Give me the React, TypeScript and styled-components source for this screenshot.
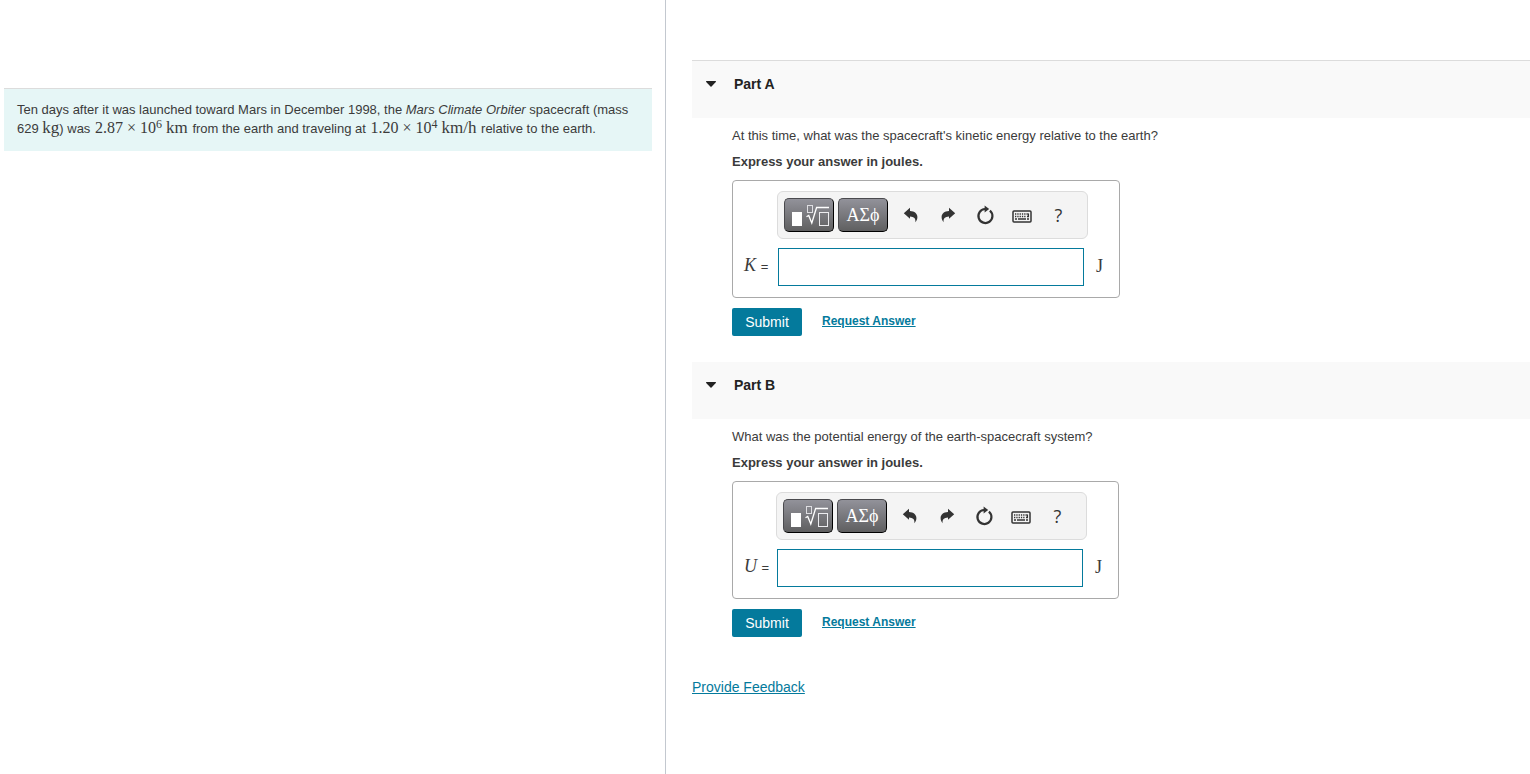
import React from "react";
import styled, { createGlobalStyle } from "styled-components";

const GlobalStyle = createGlobalStyle`
  * { box-sizing: border-box; }
  body {
    margin: 0;
    background: #fff;
    color: #3b3b3b;
    font-family: "Liberation Sans", Arial, sans-serif;
    font-size: 13px;
    line-height: 19px;
  }
  p { margin: 0; }
`;

const Layout = styled.div`
  display: flex;
  min-height: 100vh;
`;

const ProblemPane = styled.section`
  flex: 0 0 43.53%;
  border-right: 1px solid #c3c8cf;
  padding: 88px 13px 20px 4px;
`;

const ProblemBox = styled.div`
  background: #e6f6f6;
  border-top: 1px solid #dcdcdc;
  padding: 11px 13px 13px;
`;

const MathText = styled.span`
  margin: 0 1px;
  font-family: "Liberation Serif", "Times New Roman", serif;
  font-size: 16px;
  line-height: 1;
  white-space: nowrap;

  sup {
    font-size: 12px;
    line-height: 0;
    vertical-align: 5px;
  }
`;

const MathUnit = styled.span`
  font-family: "Liberation Serif", "Times New Roman", serif;
  font-size: 17px;
  line-height: 1;
`;

const AnswerPane = styled.main`
  flex: 1;
  min-width: 0;
  padding: 60px 0 40px 26px;
`;

const PartSection = styled.section`
  margin-bottom: 26px;
`;

const PartHeader = styled.header<{ $ruled?: boolean }>`
  background: #f9f9f9;
  border-top: ${(p) => (p.$ruled ? "1px solid #dcdcdc" : "0")};
  padding: 13px 14px 24px;
`;

const PartTitle = styled.h2`
  margin: 0;
  font: bold 14px/20px "Liberation Sans", Arial, sans-serif;
`;

const PartToggle = styled.button`
  display: flex;
  align-items: center;
  gap: 18px;
  border: 0;
  padding: 0;
  background: none;
  color: #222;
  font: inherit;
  cursor: pointer;
`;

const PartBody = styled.div`
  padding: 8px 16px 0 40px;
`;

const Instruction = styled.p`
  margin: 7px 0 9px;
  font-weight: bold;
`;

const AnswerBox = styled.div`
  display: grid;
  grid-template-columns: auto auto auto;
  align-items: center;
  width: fit-content;
  border: 1px solid #a9a9a9;
  border-radius: 4px;
  padding: 10px 16px 11px 11px;
`;

const Toolbar = styled.div`
  grid-column: 2 / 4;
  justify-self: start;
  display: flex;
  align-items: center;
  gap: 4px;
  height: 48px;
  margin: 0 0 9px -1px;
  border: 1px solid #dcdcdc;
  border-radius: 6px;
  padding: 0 10px 0 6px;
  background: #f4f4f4;
`;

const PaletteButton = styled.button`
  display: flex;
  align-items: center;
  justify-content: center;
  width: 50px;
  height: 34px;
  border: 1px solid #000;
  border-top-color: #4a4a4e;
  border-left-color: #4a4a4e;
  border-radius: 5px;
  padding: 0 0 1px;
  background: linear-gradient(#92929a, #5f5f60);
  color: #fff;
  font: 18px/20px "Liberation Serif", "Times New Roman", serif;
  cursor: pointer;
`;

const ToolGroup = styled.div`
  display: flex;
`;

const ToolButton = styled.button`
  display: flex;
  align-items: center;
  justify-content: center;
  width: 37px;
  height: 34px;
  border: 0;
  padding: 0;
  background: none;
  color: #333;
  font: 18px/20px "Open Sans", "Noto Sans", sans-serif;
  cursor: pointer;
`;

const VariableLabel = styled.label<{ $width: number }>`
  width: ${(p) => p.$width}px;
  padding-bottom: 3px;
  white-space: nowrap;

  i {
    margin-right: 1px;
    font: italic 18px/20px "Liberation Serif", "Times New Roman", serif;
  }
`;

const AnswerInput = styled.input`
  width: 306px;
  height: 38px;
  border: 1px solid #047a9c;
  border-radius: 0;
  padding: 0 8px;
  background: #fff;
  font: 16px/20px "Liberation Sans", Arial, sans-serif;
`;

const Unit = styled.span`
  padding: 0 0 3px 12px;
  font: 18px/20px "Liberation Serif", "Times New Roman", serif;
`;

const Actions = styled.div`
  display: flex;
  align-items: center;
  gap: 20px;
  margin-top: 10px;
`;

const SubmitButton = styled.button`
  width: 70px;
  height: 28px;
  border: 0;
  border-radius: 2px;
  padding: 0;
  background: #047a9c;
  color: #fff;
  font: 14px/28px "Liberation Sans", Arial, sans-serif;
  cursor: pointer;
`;

const TextLink = styled.a`
  color: #047a9c;
  font-size: 14px;
  text-decoration: underline;
`;

const RequestLink = styled(TextLink)`
  padding-bottom: 2px;
  font-size: 12px;
  font-weight: bold;
`;

const Feedback = styled.footer`
  padding-top: 15px;
`;

const TriangleIcon = () => (
  <svg width="10" height="6" viewBox="0 0 10 6" aria-hidden="true">
    <path d="M.4 0h9.2q.6.3.2.9L5.5 5.6q-.5.5-1 0L.2.9Q-.2.3.4 0Z" fill="#222" />
  </svg>
);

const TemplateIcon = () => (
  <svg width="40" height="24" viewBox="0 0 40 24" fill="none" stroke="#fff" aria-hidden="true">
    <rect x="3" y="9" width="10" height="14" fill="#fff" stroke="none" />
    <rect x="18.5" y="2.5" width="5" height="7" stroke="#dedee2" />
    <path d="M17.5 13.7l2.2-1.2 3.1 7.5 4.8-15.5H40" strokeWidth="1.3" />
    <rect x="30.5" y="9.5" width="9" height="13" stroke="#ececef" />
  </svg>
);

const ArrowIcon = ({ flipped }: { flipped?: boolean }) => (
  <svg width="16" height="16" viewBox="0 0 16 16" aria-hidden="true">
    <path
      transform={flipped ? "translate(16 0) scale(-1 1)" : undefined}
      d="M.8 6.3 7 .8v3.1c4.6.2 7.4 2.5 7.4 6.1 0 2-.7 3.8-2 5.3.4-3.8-1.3-5.6-5.4-5.8v2.3Z"
      fill="#333"
    />
  </svg>
);

const ResetIcon = () => (
  <svg width="18" height="20" viewBox="0 0 18 20" aria-hidden="true">
    <path d="M13.9 5.6A7 7 0 1 1 9 4" fill="none" stroke="#333" strokeWidth="2.2" />
    <path d="M8.6.6 13.2 4 8.6 7.5Z" fill="#333" />
  </svg>
);

const KeyboardIcon = () => (
  <svg width="20" height="18" viewBox="0 0 20 18" aria-hidden="true">
    <rect x="1" y="5" width="18" height="11" rx="1" fill="none" stroke="#333" strokeWidth="1.5" />
    <path d="M3 8h14M3 10.5h10.5" stroke="#333" strokeWidth="1.3" strokeDasharray="1.3 1" />
    <path d="M3 13h2M6 13h8M15 13h2M15 10.5h2M16.4 7.5V11" stroke="#333" strokeWidth="1.3" />
  </svg>
);

type PartProps = {
  id: string;
  title: string;
  question: string;
  variable: string;
  labelWidth: number;
  ruled?: boolean;
};

const Part = ({ id, title, question, variable, labelWidth, ruled }: PartProps) => (
  <PartSection>
    <PartHeader $ruled={ruled}>
      <PartTitle>
        <PartToggle type="button" aria-expanded="true">
          <TriangleIcon />
          {title}
        </PartToggle>
      </PartTitle>
    </PartHeader>
    <PartBody>
      <p>{question}</p>
      <Instruction>Express your answer in joules.</Instruction>
      <AnswerBox>
        <Toolbar role="toolbar">
          <PaletteButton type="button" aria-label="Templates">
            <TemplateIcon />
          </PaletteButton>
          <PaletteButton type="button">ΑΣϕ</PaletteButton>
          <ToolGroup>
            <ToolButton type="button" aria-label="Undo">
              <ArrowIcon />
            </ToolButton>
            <ToolButton type="button" aria-label="Redo">
              <ArrowIcon flipped />
            </ToolButton>
            <ToolButton type="button" aria-label="Reset">
              <ResetIcon />
            </ToolButton>
            <ToolButton type="button" aria-label="Keyboard shortcuts">
              <KeyboardIcon />
            </ToolButton>
            <ToolButton type="button">?</ToolButton>
          </ToolGroup>
        </Toolbar>
        <VariableLabel htmlFor={id} $width={labelWidth}>
          <i>{variable}</i> =
        </VariableLabel>
        <AnswerInput id={id} type="text" />
        <Unit>J</Unit>
      </AnswerBox>
      <Actions>
        <SubmitButton type="button">Submit</SubmitButton>
        <RequestLink href="#request">Request Answer</RequestLink>
      </Actions>
    </PartBody>
  </PartSection>
);

export default function App() {
  return (
    <>
      <GlobalStyle />
      <Layout>
        <ProblemPane>
          <ProblemBox>
            <p>
              Ten days after it was launched toward Mars in December 1998, the{" "}
              <em>Mars Climate Orbiter</em> spacecraft (mass 629 <MathUnit>kg</MathUnit>) was{" "}
              <MathText>
                2.87 × 10<sup>6</sup> <MathUnit>km</MathUnit>
              </MathText>{" "}
              from the earth and traveling at{" "}
              <MathText>
                1.20 × 10<sup>4</sup> <MathUnit>km/h</MathUnit>
              </MathText>{" "}
              relative to the earth.
            </p>
          </ProblemBox>
        </ProblemPane>
        <AnswerPane>
          <Part
            id="kinetic"
            title="Part A"
            question="At this time, what was the spacecraft's kinetic energy relative to the earth?"
            variable="K"
            labelWidth={34}
            ruled
          />
          <Part
            id="potential"
            title="Part B"
            question="What was the potential energy of the earth-spacecraft system?"
            variable="U"
            labelWidth={33}
          />
          <Feedback>
            <TextLink href="#feedback">Provide Feedback</TextLink>
          </Feedback>
        </AnswerPane>
      </Layout>
    </>
  );
}
